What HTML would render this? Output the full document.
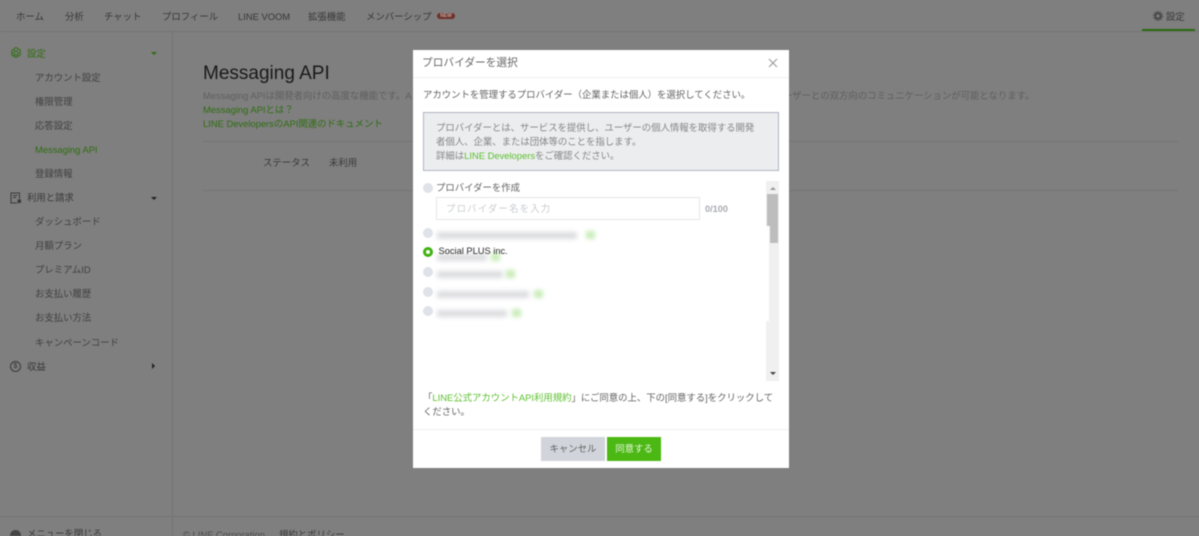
<!DOCTYPE html>
<html lang="ja"><head><meta charset="utf-8"><style>
html,body{margin:0;padding:0;width:1199px;height:536px;overflow:hidden;background:#7f7f7f}
body{position:relative;font-family:"Liberation Sans","Noto Sans CJK JP",sans-serif;font-size:9.4px;color:#333}
#w{position:absolute;left:0;top:0;width:1199px;height:536px;overflow:hidden;filter:blur(.5px)}
.t{position:absolute;white-space:nowrap;line-height:14px;margin-top:1px}
.b{position:absolute}
.n{color:#383838;top:9px}
.s{color:#404040;left:35px}
.g{color:#2f6e10}
.d{color:#626262}
.r{position:absolute;left:423px;width:10px;height:10px;border-radius:50%;background:#dfe2e8}
.bl{position:absolute;height:7px;background:#dcdde0;filter:blur(2.5px)}
.bg{position:absolute;width:9px;height:8px;background:#c9edba;filter:blur(2px)}
</style></head><body><div id="w">
<div class="b" style="left:0;top:31px;width:1199px;height:1px;background:#747474"></div>
<span class="t n" style="left:16px">ホーム</span>
<span class="t n" style="left:65px">分析</span>
<span class="t n" style="left:104px">チャット</span>
<span class="t n" style="left:162px">プロフィール</span>
<span class="t n" style="left:238px">LINE VOOM</span>
<span class="t n" style="left:308px">拡張機能</span>
<span class="t n" style="left:366px">メンバーシップ</span>
<div class="b" style="left:437px;top:13px;width:18px;height:6px;border-radius:3px;background:#6e3028;color:#b9a5a2;font-size:5px;line-height:6px;text-align:center;font-weight:bold">NEW</div>
<svg class="b" style="left:1153px;top:11px" width="10" height="10" viewBox="0 0 10 10"><circle cx="5" cy="5" r="2.600" fill="none" stroke="#444" stroke-width="1.800"/><circle cx="5" cy="5" r="4.300" fill="none" stroke="#444" stroke-width="1.200" stroke-dasharray="1.600 1.100"/></svg>
<span class="t n" style="left:1166px">設定</span>
<div class="b" style="left:1142px;top:29px;width:53px;height:2px;background:#2a6a10"></div>

<div class="b" style="left:172px;top:32px;width:1px;height:504px;background:#747474"></div>
<div class="b" style="left:0;top:516px;width:1199px;height:1px;background:#747474"></div>

<svg class="b" style="left:10px;top:47px" width="12" height="12" viewBox="0 0 12 12"><circle cx="6" cy="6" r="2" fill="none" stroke="#2f6e10" stroke-width="1"/><path d="M4.700.8h2.600l.4 1.700 1.600-.5 1.300 2.200-1.200 1.300 1.200 1.300-1.300 2.200-1.600-.5-.4 1.700H4.700l-.4-1.700-1.600.5-1.300-2.200L2.600 6 1.400 4.700 2.700 2.500l1.600.5z" fill="none" stroke="#2f6e10" stroke-width=".9"/></svg>
<span class="t g" style="left:27px;top:46px">設定</span>
<div class="b" style="left:151px;top:52px;border:3px solid transparent;border-top:3px solid #2f6e10;border-bottom:0"></div>
<span class="t s" style="top:70px">アカウント設定</span>
<span class="t s" style="top:94px">権限管理</span>
<span class="t s" style="top:118px">応答設定</span>
<span class="t g" style="left:35px;top:142px">Messaging API</span>
<span class="t s" style="top:166px">登録情報</span>
<svg class="b" style="left:10px;top:192px" width="12" height="12" viewBox="0 0 12 12"><path d="M9.500 7V1H1v10h6M3 3.500h4.500M3 5.500h3" fill="none" stroke="#3a3a3a" stroke-width="1"/><rect x="7.500" y="7.500" width="3.500" height="3.500" fill="#3a3a3a"/></svg>
<span class="t" style="left:27px;top:190px;color:#383838">利用と請求</span>
<div class="b" style="left:151px;top:197px;border:3px solid transparent;border-top:3px solid #222;border-bottom:0"></div>
<span class="t s" style="top:214px">ダッシュボード</span>
<span class="t s" style="top:238px">月額プラン</span>
<span class="t s" style="top:262px">プレミアムID</span>
<span class="t s" style="top:286px">お支払い履歴</span>
<span class="t s" style="top:310px">お支払い方法</span>
<span class="t s" style="top:335px">キャンペーンコード</span>
<div class="b" style="left:10px;top:361px;width:9px;height:9px;border:1px solid #3a3a3a;border-radius:50%;font-size:7px;line-height:9px;text-align:center">$</div>
<span class="t" style="left:27px;top:359px;color:#383838">収益</span>
<div class="b" style="left:152px;top:363px;border:3px solid transparent;border-left:3px solid #222;border-right:0"></div>
<div class="b" style="left:10px;top:530px;width:11px;height:11px;border-radius:50%;background:#444"></div>
<span class="t" style="left:27px;top:526px;color:#383838">メニューを閉じる</span>
<span class="t" style="left:183px;top:527px;color:#4c4c4c">© LINE Corporation</span>
<span class="t" style="left:279px;top:527px;color:#3a3a3a">規約とポリシー</span>

<span class="t" style="left:203px;top:61px;font-size:19px;line-height:24px;color:#1a1a1a">Messaging API</span>
<span class="t" style="left:203px;top:88px;color:#5f5f5f">Messaging APIは開発者向けの高度な機能です。A</span>
<span class="t" style="left:783px;top:88px;color:#5f5f5f">ーザーとの双方向のコミュニケーションが可能となります。</span>
<span class="t g" style="left:203px;top:102px">Messaging APIとは？</span>
<span class="t g" style="left:203px;top:116px">LINE DevelopersのAPI関連のドキュメント</span>
<div class="b" style="left:203px;top:141px;width:975px;height:1px;background:#747474"></div>
<span class="t" style="left:263px;top:155px;color:#383838">ステータス</span>
<span class="t" style="left:329px;top:155px;color:#383838">未利用</span>
<div class="b" style="left:203px;top:190px;width:975px;height:1px;background:#747474"></div>

<div class="b" style="left:413px;top:50px;width:376px;height:418px;background:#fff"></div>
<span class="t" style="left:422px;top:55px;font-size:10.700px;color:#666">プロバイダーを選択</span>
<svg class="b" style="left:768px;top:58px" width="10" height="10" viewBox="0 0 10 10"><path d="M1 1l8 8M9 1l-8 8" stroke="#999" stroke-width="1.100"/></svg>
<div class="b" style="left:413px;top:77px;width:376px;height:1px;background:#eef0f2"></div>
<span class="t d" style="left:423px;top:87px">アカウントを管理するプロバイダー（企業または個人）を選択してください。</span>
<div class="b" style="left:423px;top:112px;width:354px;height:57px;background:#ecedef;border:1px solid #b0b4c2"></div>
<span class="t" style="left:436px;top:120px;color:#858585">プロバイダーとは、サービスを提供し、ユーザーの個人情報を取得する開発</span>
<span class="t" style="left:436px;top:134px;color:#858585">者個人、企業、または団体等のことを指します。</span>
<span class="t" style="left:436px;top:148px;color:#858585">詳細は<span style="color:#5cc02e">LINE Developers</span>をご確認ください。</span>

<div class="r" style="top:183px"></div>
<span class="t d" style="left:436px;top:180px">プロバイダーを作成</span>
<div class="b" style="left:436px;top:197px;width:262px;height:21px;border:1px solid #e4e6ea;background:#fff"></div>
<span class="t" style="left:446px;top:201px;color:#c8cbd0;letter-spacing:1.200px">プロバイダー名を入力</span>
<span class="t" style="left:705px;top:201px;color:#a8abb0;font-weight:bold;font-size:9.200px">0/100</span>

<div class="b" style="left:766px;top:181px;width:13px;height:200px;background:#f0f0f0"></div>
<div class="b" style="left:770px;top:187px;border:3px solid transparent;border-bottom:3px solid #999;border-top:0"></div>
<div class="b" style="left:770px;top:372px;border:3px solid transparent;border-top:3px solid #444;border-bottom:0"></div>
<div class="b" style="left:767px;top:194px;width:11px;height:32px;background:#bdbdbd"></div>
<div class="b" style="left:770px;top:226px;width:8px;height:17px;background:#bdbdbd"></div>
<div class="b" style="left:434px;top:226px;width:335px;height:95px;background:#fff"></div>

<div class="r" style="top:228px"></div>
<div class="bl" style="left:437px;top:232px;width:140px"></div><div class="bg" style="left:586px;top:231px"></div>
<div class="b" style="left:423px;top:247px;width:10px;height:10px;border-radius:50%;background:#fff;border:3px solid #3fb20f;box-sizing:border-box"></div>
<div class="bl" style="left:437px;top:254px;width:50px"></div><div class="bg" style="left:491px;top:253px"></div>
<span class="t" style="left:438.500px;top:243px;font-size:9.300px;color:#2a2a2a">Social PLUS inc.</span>
<div class="r" style="top:267px"></div>
<div class="bl" style="left:437px;top:271px;width:66px"></div><div class="bg" style="left:506px;top:270px"></div>
<div class="r" style="top:287px"></div>
<div class="bl" style="left:437px;top:291px;width:92px"></div><div class="bg" style="left:534px;top:290px"></div>
<div class="r" style="top:306px"></div>
<div class="bl" style="left:437px;top:310px;width:70px"></div><div class="bg" style="left:512px;top:309px"></div>

<span class="t d" style="left:423px;top:390px">「<span style="color:#5cc02e">LINE公式アカウントAPI利用規約</span>」にご同意の上、下の[同意する]をクリックして</span>
<span class="t d" style="left:423px;top:404px">ください。</span>
<div class="b" style="left:413px;top:429px;width:376px;height:1px;background:#eef0f2"></div>
<div class="b" style="left:541px;top:437px;width:64px;height:24px;background:#d1d4da;color:#626262;text-align:center;line-height:24px">キャンセル</div>
<div class="b" style="left:607px;top:437px;width:54px;height:24px;background:#4cb814;color:#e6f6de;text-align:center;line-height:24px">同意する</div>
</div></body></html>
